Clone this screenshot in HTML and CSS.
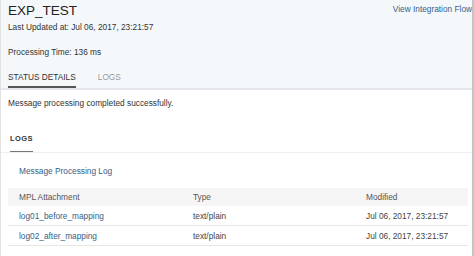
FILE: index.html
```html
<!DOCTYPE html>
<html lang="en">
<head>
    <meta charset="UTF-8">
    <title>EXP_TEST</title>
    <link rel="stylesheet" href="styles.css">
</head>
<body>
    <div class="page">
        <header class="head">
            <div class="head-top">
                <h1>EXP_TEST</h1>
                <a href="#" class="flow-link">View Integration Flow</a>
            </div>
            <p class="meta">Last Updated at: Jul 06, 2017, 23:21:57</p>
            <p class="meta">Processing Time: 136 ms</p>
            <nav class="tabs">
                <a href="#" class="tab active">STATUS DETAILS</a>
                <a href="#" class="tab">LOGS</a>
            </nav>
        </header>

        <div class="status">Message processing completed successfully.</div>

        <div class="section-title">
            <span>LOGS</span>
        </div>

        <div class="logs">
            <a href="#" class="log-link">Message Processing Log</a>
            <table class="att-table">
                <tr>
                    <th class="col-name">MPL Attachment</th>
                    <th class="col-type">Type</th>
                    <th>Modified</th>
                </tr>
                <tr>
                    <td><a href="#">log01_before_mapping</a></td>
                    <td>text/plain</td>
                    <td>Jul 06, 2017, 23:21:57</td>
                </tr>
                <tr>
                    <td><a href="#">log02_after_mapping</a></td>
                    <td>text/plain</td>
                    <td>Jul 06, 2017, 23:21:57</td>
                </tr>
            </table>
        </div>
    </div>
</body>
</html>
```

FILE: styles.css
```css
body {
    margin: 0;
    font-family: "Liberation Sans", Arial, sans-serif;
    font-size: 8.3px;
    color: #333;
    background: #fff;
}
a {
    color: #346187;
    text-decoration: none;
}
.page {
    height: 256px;
    border-left: 1px solid #e2e2e2;
    border-right: 2px solid #c4c4c4;
    box-sizing: border-box;
    overflow: hidden;
}
.head {
    background-color: #f5f8fb;
    border-bottom: 2px solid #e4e7eb;
    padding: 3px 0 0 7px;
}
.head-top {
    display: flex;
    justify-content: space-between;
    align-items: flex-start;
}
.head h1 {
    margin: 0;
    font-size: 13.5px;
    font-weight: normal;
    color: #222;
    line-height: 16px;
}
.flow-link {
    margin-top: 1px;
    white-space: nowrap;
    line-height: 10px;
}
.meta {
    margin: 0;
    line-height: 10px;
}
.head-top + .meta {
    margin-top: 3px;
}
.meta + .meta {
    margin-top: 15px;
}
.tabs {
    display: flex;
    gap: 22px;
    margin-top: 15px;
}
.tab {
    color: #999;
    padding-bottom: 4px;
    line-height: 10px;
    border-bottom: 2px solid transparent;
}
.tab.active {
    color: #333;
    border-bottom-color: #555;
}
.status {
    padding: 8px 0 0 7px;
    line-height: 10px;
}
.section-title {
    margin-top: 25px;
    padding-left: 9px;
    border-bottom: 1px solid #edeff1;
}
.section-title span {
    display: inline-block;
    font-weight: bold;
    font-size: 7.5px;
    letter-spacing: 0.4px;
    color: #333;
    line-height: 10px;
    padding-bottom: 7px;
    border-bottom: 1px solid #777;
}
.logs {
    padding: 13px 4px 0 7px;
}
.log-link {
    display: block;
    padding-left: 11px;
    line-height: 10px;
}
.att-table {
    margin-top: 12px;
    width: 100%;
    border-collapse: collapse;
}
.att-table th {
    background-color: #f5f5f5;
    font-weight: normal;
    color: #555;
    text-align: left;
    height: 18px;
    padding: 0 0 0 11px;
}
.att-table td {
    height: 19px;
    padding: 0 0 0 11px;
    border-bottom: 1px solid #e6e6e6;
    color: #444;
    white-space: nowrap;
}
.col-name {
    width: 163px;
}
.col-type {
    width: 162px;
}
```
